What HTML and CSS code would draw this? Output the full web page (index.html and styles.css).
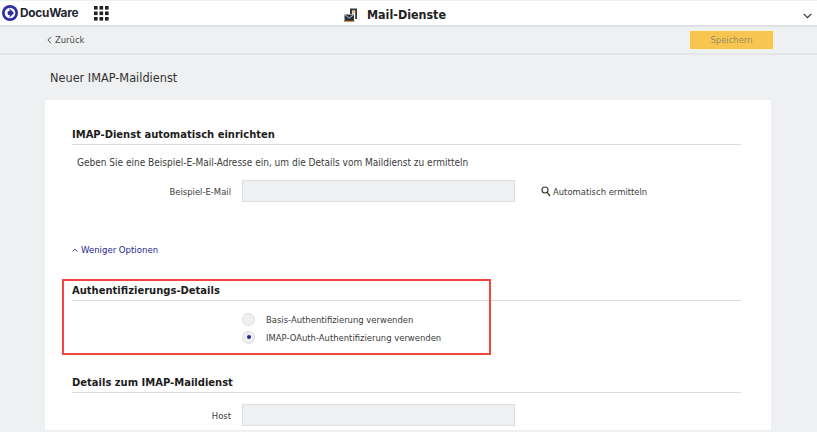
FILE: index.html
```html
<!DOCTYPE html>
<html lang="de">
<head>
<meta charset="utf-8">
<title>Mail-Dienste</title>
<link rel="stylesheet" href="styles.css">
</head>
<body>
<header class="topbar">
  <div class="brand">
    <svg class="logo" width="16" height="16" viewBox="0 0 18 18"><circle cx="9" cy="9" r="9" fill="#2b2f9e"/><circle cx="9" cy="9" r="6" fill="#fff"/><path d="M8 3.500 13.500 9 8 14.500 9.800 9z" fill="#2b2f9e"/><circle cx="8.800" cy="9" r="2.600" fill="#2b2f9e"/></svg>
    <span class="brand-name">DocuWare</span>
  </div>
  <svg class="apps" width="15" height="15" viewBox="0 0 15 15" fill="#222"><rect x="0" y="0" width="3.600" height="3.600"/><rect x="5.500" y="0" width="3.600" height="3.600"/><rect x="11" y="0" width="3.600" height="3.600"/><rect x="0" y="5.500" width="3.600" height="3.600"/><rect x="5.500" y="5.500" width="3.600" height="3.600"/><rect x="11" y="5.500" width="3.600" height="3.600"/><rect x="0" y="11" width="3.600" height="3.600"/><rect x="5.500" y="11" width="3.600" height="3.600"/><rect x="11" y="11" width="3.600" height="3.600"/></svg>
  <div class="title">
    <svg width="14" height="14" viewBox="0 0 14 14"><path d="M6 .5h7v10.500h-1.800V2.500H8V6H6z" fill="#3a3a3a"/><rect x="8.500" y="3.500" width="2" height="1.600" fill="#c98a2c"/><path d="M.5 6.500h9.500v6.500H.5z" fill="#2a3040"/><path d="M.8 6.800 5.250 10 9.700 6.800" fill="none" stroke="#e9e9e9" stroke-width=".8"/><rect x="0" y="12.800" width="10.500" height="1.100" fill="#c98a2c"/></svg>
    <span>Mail-Dienste</span>
  </div>
  <svg class="chev" width="9" height="6" viewBox="0 0 9 6"><path d="M.7.8 4.500 4.600 8.300.8" fill="none" stroke="#333" stroke-width="1.200"/></svg>
</header>
<nav class="toolbar">
  <a class="back"><svg width="5" height="8" viewBox="0 0 5 8"><path d="M4 .7.900 4 4 7.300" fill="none" stroke="#444" stroke-width=".9"/></svg>Zurück</a>
  <button class="save" type="button">Speichern</button>
</nav>
<main class="page">
  <h1 class="page-title">Neuer IMAP-Maildienst</h1>
  <section class="card">
    <h2 class="sec sec-first">IMAP-Dienst automatisch einrichten</h2>
    <p class="hint">Geben Sie eine Beispiel-E-Mail-Adresse ein, um die Details vom Maildienst zu ermitteln</p>
    <div class="row">
      <label class="lbl">Beispiel-E-Mail</label>
      <div class="input"></div>
      <a class="auto"><svg width="10" height="11" viewBox="0 0 10 11"><circle cx="4" cy="4" r="3" fill="none" stroke="#333" stroke-width="1.100"/><path d="M6 6.200 9 10" stroke="#333" stroke-width="1.300"/></svg>Automatisch ermitteln</a>
    </div>
    <a class="less"><svg width="6" height="4" viewBox="0 0 6 4"><path d="M.5 3.500 3 1 5.500 3.500" fill="none" stroke="#26268c" stroke-width=".8"/></svg>Weniger Optionen</a>
    <div class="highlight-wrap">
      <h2 class="sec">Authentifizierungs-Details</h2>
      <div class="radios">
        <div class="radio-row"><span class="radio"></span>Basis-Authentifizierung verwenden</div>
        <div class="radio-row"><span class="radio on"></span>IMAP-OAuth-Authentifizierung verwenden</div>
      </div>
      <div class="redbox"></div>
    </div>
    <h2 class="sec sec-third">Details zum IMAP-Maildienst</h2>
    <div class="row row-host">
      <label class="lbl">Host</label>
      <div class="input"></div>
    </div>
  </section>
</main>
</body>
</html>
```
FILE: styles.css
```css
* { box-sizing: border-box; }
html, body { margin: 0; height: 100%; }
body {
  width: 817px;
  height: 432px;
  overflow: hidden;
  background: #eef0f1;
  font-family: "DejaVu Sans", sans-serif;
  font-stretch: condensed;
  font-size: 9.400px;
  color: #3c3c3c;
}
.topbar {
  height: 26px;
  margin-top: 1px;
  background: #fff;
  border-bottom: 2px solid #dfe2e3;
  display: flex;
  align-items: center;
  position: relative;
  padding-left: 2px;
}
.brand { display: flex; align-items: center; gap: 2px; width: 92px; }
.brand-name { font-family: "Inter", sans-serif; font-weight: 700; font-stretch: normal; font-size: 11.800px; color: #1f2530; letter-spacing: -.2px; }
.logo { flex: none; }
.apps { flex: none; }
.title {
  position: absolute;
  left: 344px;
  top: 5px;
  display: flex;
  align-items: center;
  gap: 9px;
  font-weight: 700;
  font-size: 12.400px;
  line-height: 17px;
  color: #222;
}
.chev { position: absolute; right: 5px; top: 12px; }
.toolbar {
  height: 28px;
  padding: 0 43px 1px 47px;
  border-bottom: 2px solid #e3e5e6;
  display: flex;
  align-items: center;
  justify-content: space-between;
}
.back { display: flex; align-items: center; gap: 3px; color: #4a4a4a; }
.save {
  width: 85px;
  height: 20px;
  border: 1px solid #fbf3dc;
  background: #f8c650;
  color: #9a8a60;
  font: inherit;
  padding: 0;
}
.page { padding: 0 46px 0 45px; }
.page-title { margin: 0; height: 45px; padding: 14px 0 0 5px; font-size: 12.600px; line-height: 17px; font-weight: 400; color: #333; }
.card { background: #fff; height: 330px; padding: 0 30px 0 27px; }
.sec {
  margin: 0;
  font-size: 11.100px;
  line-height: 17px;
  font-weight: 700;
  color: #1d1d1d;
  border-bottom: 1px solid #dcdcdc;
  padding-bottom: 1px;
}
.sec-first { padding-top: 26px; }
.hint { margin: 0; padding: 11px 0 0 5px; line-height: 14px; font-size: 10px; }
.row { display: flex; align-items: center; margin-top: 10px; }
.lbl { width: 170px; padding-right: 11px; text-align: right; flex: none; }
.input { width: 273px; height: 22px; background: #eef0f1; border: 1px solid #dcdfe0; flex: none; }
.auto { display: flex; align-items: center; gap: 2px; margin-left: 26px; }
.less { display: flex; align-items: center; gap: 3px; margin-top: 41px; line-height: 14px; color: #26268c; font-size: 9.500px; }
.highlight-wrap { position: relative; margin-top: 25px; }
.radios { padding: 9px 0 0 170px; }
.radio-row { display: flex; align-items: center; gap: 11px; height: 18px; }
.radio { width: 13px; height: 13px; border-radius: 50%; background: #eef0f1; border: 1px solid #d9dcdd; position: relative; }
.radio.on::after { content: ""; position: absolute; left: 3.500px; top: 3.500px; width: 4px; height: 4px; border-radius: 50%; background: #1f2a9c; }
.redbox { position: absolute; left: -10px; top: -3px; width: 429px; height: 76px; border: 2px solid #f4453f; pointer-events: none; }
.sec-third { margin-top: 28px; }
.row-host { margin-top: 11px; }
```
